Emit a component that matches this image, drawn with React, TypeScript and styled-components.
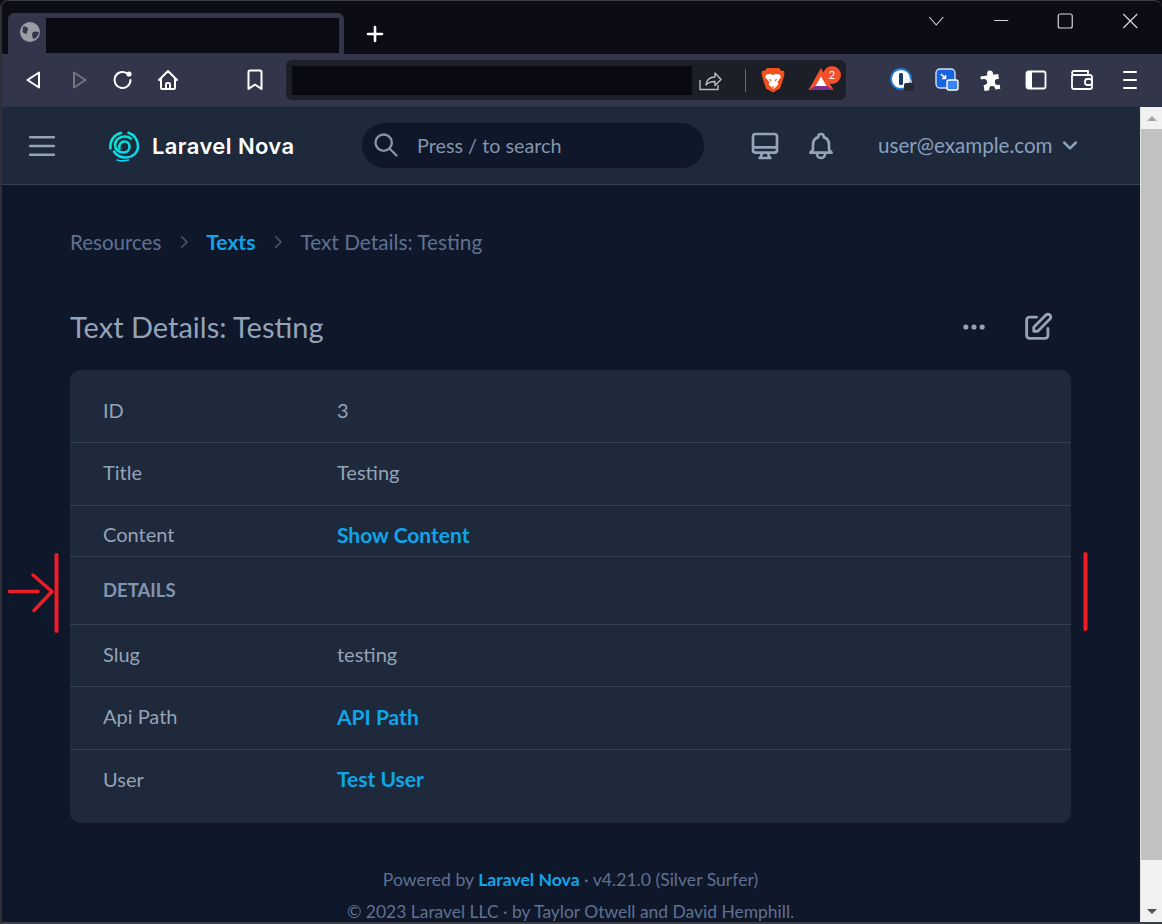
import { createGlobalStyle, styled } from "styled-components";

const GlobalStyle = createGlobalStyle`
  html, body {
    margin: 0;
    padding: 0;
    background: #0b0c14;
  }
  * {
    box-sizing: border-box;
  }
`;

const Win = styled.div`
  position: relative;
  width: 1162px;
  height: 924px;
  overflow: hidden;
  display: flex;
  flex-direction: column;
  background: #0b0c14;
  border-top: 1px solid #3a3c46;
  border-left: 2px solid #2e3038;
  border-bottom: 2px solid #3a3c46;
  border-radius: 8px 8px 0 0;
  font-family: "Lato", "Liberation Sans", sans-serif;
`;

const TabStrip = styled.div`
  height: 53px;
  flex: none;
  display: flex;
  align-items: flex-end;
  padding-left: 6px;
`;
const Tab = styled.div`
  width: 336px;
  height: 41px;
  background: #33364a;
  border-radius: 6px 6px 0 0;
  display: flex;
  align-items: flex-start;
  padding: 5px 5px 1px 12px;
  gap: 6px;
`;
const TabFavicon = styled.svg`
  width: 20px;
  height: 20px;
  margin-top: 4px;
  flex: none;
`;
const TabTitle = styled.div`
  flex: 1;
  height: 35px;
  background: #0a0b13;
`;
const NewTab = styled.svg`
  width: 20px;
  height: 20px;
  margin: 0 0 10px 21px;
  color: #fff;
`;
const WinControls = styled.div`
  margin-left: auto;
  align-self: flex-start;
  display: flex;
  color: #d6d7db;
`;
const WinButton = styled.svg`
  width: 64.5px;
  height: 16px;
  margin-top: 12px;
  overflow: visible;
`;

const Toolbar = styled.div`
  height: 52px;
  flex: none;
  background: #33364a;
  display: flex;
  align-items: center;
  padding-left: 10px;
  color: #fff;
`;
const ToolButton = styled.div<{ $w?: number }>`
  width: ${(p) => p.$w ?? 44.6}px;
  height: 40px;
  flex: none;
  display: flex;
  align-items: center;
  justify-content: center;
`;
const Glyph = styled.svg<{ $size?: number; $dim?: boolean }>`
  width: ${(p) => p.$size ?? 24}px;
  height: ${(p) => p.$size ?? 24}px;
  flex: none;
  color: ${(p) => (p.$dim ? "#73757f" : "inherit")};
  overflow: visible;
`;
const ToolSpacer = styled.div`
  width: 42px;
  flex: none;
`;
const AddressBar = styled.div`
  width: 560px;
  height: 40px;
  flex: none;
  margin-left: 9px;
  border-radius: 6px;
  background: #1c1e28;
  display: flex;
  align-items: center;
  padding-left: 6px;
  color: #b9bac0;
`;
const UrlBlock = styled.div`
  width: 400px;
  height: 29px;
  background: #090a11;
`;
const AddressDivider = styled.div`
  width: 1px;
  height: 23px;
  background: #6a6c75;
  margin: 0 14px 0 17px;
`;
const BatWrap = styled.div`
  position: relative;
  width: 26px;
  height: 26px;
  margin-left: 22px;
`;
const BatBadge = styled.span`
  position: absolute;
  top: -1px;
  right: -7px;
  width: 18px;
  height: 18px;
  border-radius: 50%;
  background: #f0502c;
  color: #fff;
  font-size: 11px;
  line-height: 18px;
  text-align: center;
`;
const ToolRight = styled.div`
  margin-left: 34px;
  display: flex;
  align-items: center;
`;

const Viewport = styled.div`
  flex: 1;
  min-height: 0;
  display: flex;
  border-top: 1px solid #2a3447;
`;
const Page = styled.div`
  flex: 1;
  min-width: 0;
  background: #0f172a;
  display: flex;
  flex-direction: column;
`;
const Scrollbar = styled.div`
  width: 22px;
  flex: none;
  background: #f1f1f1;
  border-left: 1px solid #e2e2e2;
  display: flex;
  flex-direction: column;
  align-items: center;
`;
const ScrollArrow = styled.div<{ $down?: boolean }>`
  height: 22px;
  flex: none;
  display: flex;
  align-items: center;
  justify-content: center;
  margin-top: ${(p) => (p.$down ? "auto" : "0")};
  &::before {
    content: "";
    border-left: 5px solid transparent;
    border-right: 5px solid transparent;
    ${(p) => (p.$down ? "border-top: 5px solid #505050;" : "border-bottom: 5px solid #a3a3a3;")}
  }
`;
const ScrollThumb = styled.div`
  width: 100%;
  height: 731px;
  background: #c1c1c1;
`;

const Header = styled.header`
  height: 78px;
  flex: none;
  background: #1e293b;
  border-bottom: 1px solid #334155;
  display: flex;
  align-items: center;
  color: #94a3b8;
`;
const MenuButton = styled.div`
  width: 106px;
  padding-left: 25px;
  flex: none;
  display: flex;
`;
const Brand = styled.div`
  width: 254px;
  flex: none;
  display: flex;
  align-items: center;
  gap: 12px;
`;
const BrandName = styled.span`
  font-family: "Inter", "Liberation Sans", sans-serif;
  font-size: 22px;
  font-weight: 600;
  letter-spacing: 0.4px;
  color: #fff;
`;
const Search = styled.div`
  width: 342px;
  height: 45px;
  flex: none;
  border-radius: 23px;
  background: #0f172a;
  display: flex;
  align-items: center;
  padding: 0 0 2px 10px;
  gap: 17px;
  font-size: 19.8px;
  color: #8494ac;
`;
const HeaderIcons = styled.div`
  display: flex;
  align-items: center;
  gap: 24px;
  margin-left: 45px;
`;
const UserMenu = styled.div`
  margin-left: 41px;
  padding-bottom: 2px;
  display: flex;
  align-items: center;
  gap: 7px;
  font-size: 20.6px;
  color: #8aa0bf;
`;

const Main = styled.main`
  padding: 42px 69px 0 68px;
`;
const Crumbs = styled.nav`
  display: flex;
  align-items: center;
  height: 29px;
  font-size: 20.5px;
  color: #5f7190;
`;
const CrumbSep = styled.svg`
  width: 18px;
  height: 18px;
  margin: 0 13.5px;
  color: #4b5a73;
`;
const CrumbLink = styled.a`
  font-size: 21px;
  font-weight: 700;
  color: #0ea5e9;
`;
const CrumbCurrent = styled.span`
  font-size: 20.8px;
`;
const TitleRow = styled.div`
  display: flex;
  align-items: center;
  justify-content: space-between;
  margin-top: 42px;
  height: 58px;
`;
const Title = styled.h1`
  margin: 0 0 2px;
  font-size: 29px;
  font-weight: 400;
  color: #94a3b8;
`;
const TitleActions = styled.div`
  display: flex;
  align-items: center;
  gap: 33px;
  padding-right: 16px;
  color: #94a3b8;
`;
const Card = styled.section`
  margin-top: 14px;
  background: #1e293b;
  border-radius: 10px;
  display: flex;
  flex-direction: column;
`;
const Row = styled.div<{ $h: number; $top?: number; $bottom?: number; $last?: boolean }>`
  height: ${(p) => p.$h}px;
  display: grid;
  grid-template-columns: 234px 1fr;
  align-items: center;
  padding: ${(p) => p.$top ?? 0}px 33px ${(p) => p.$bottom ?? 0}px;
  font-size: 20px;
  color: #94a3b8;
  border-bottom: ${(p) => (p.$last ? "none" : "1px solid #334155")};
`;
const RowLink = styled.a`
  font-size: 21px;
  font-weight: 700;
  color: #0ea5e9;
`;
const PanelHeading = styled.span`
  font-size: 18.5px;
  font-weight: 700;
  color: #8195b2;
`;

const Footer = styled.footer`
  margin-top: 41px;
  text-align: center;
  font-size: 17.6px;
  line-height: 32px;
  color: #5f7190;
`;
const FooterLink = styled.a`
  font-weight: 700;
  color: #0ea5e9;
`;
const Copyright = styled.div`
  font-size: 17.45px;
`;

const Scribble = styled.svg`
  position: absolute;
  top: 0;
  left: -2px;
  width: 1162px;
  height: 924px;
  pointer-events: none;
`;

const stroke = {
  fill: "none",
  stroke: "currentColor",
  strokeWidth: 2,
  strokeLinecap: "round" as const,
  strokeLinejoin: "round" as const,
};

type FieldRow = { label: string; value: string; link?: boolean; h: number; top?: number; bottom?: number };

const rows: FieldRow[] = [
  { label: "ID", value: "3", h: 73, top: 8 },
  { label: "Title", value: "Testing", h: 63, bottom: 4 },
  { label: "Content", value: "Show Content", link: true, h: 51, top: 6 },
];
const detailRows: FieldRow[] = [
  { label: "Slug", value: "testing", h: 62, bottom: 4 },
  { label: "Api Path", value: "API Path", link: true, h: 63, bottom: 4 },
  { label: "User", value: "Test User", link: true, h: 73, bottom: 16 },
];

function Spiral() {
  return (
    <Glyph $size={32} viewBox="0 0 32 32">
      <defs>
        <linearGradient id="sw" x1="0" y1="0" x2="1" y2="1">
          <stop offset="0" stopColor="#00e8cf" />
          <stop offset="1" stopColor="#10d0f0" />
        </linearGradient>
      </defs>
      <path
        d="M11.500 18.500C10.500 14.500 13.500 11.500 16.500 11.500C19.500 11.500 21.500 14 21.500 16.500C21.500 20 19 22.500 15.500 22.500C11 22.500 7 19.500 7 15C7 10 11.500 6.500 16.500 6.500C19 6.500 21 7 23 8.500M20.500 2.800C26 4.500 30 10 30 16C30 23 24.500 27.500 17.500 27.500C13 27.500 8.500 25.500 6 21.500M2.500 18.500C1.500 11 6 4.500 13 3"
        fill="none"
        stroke="url(#sw)"
        strokeWidth="2.600"
        strokeLinecap="round"
      />
      <path d="M9 30C12.500 31.200 16.500 31.200 20.500 30" fill="none" stroke="#10d0f0" strokeWidth="1.600" strokeLinecap="round" />
    </Glyph>
  );
}

function RowValue({ value, link }: { value: string; link?: boolean }) {
  return link ? <RowLink>{value}</RowLink> : <span>{value}</span>;
}

export default function App() {
  return (
    <Win>
      <GlobalStyle />
      <TabStrip>
        <Tab>
          <TabFavicon viewBox="0 0 20 20">
            <circle cx="10" cy="10" r="10" fill="#9a9ca6" />
            <path d="M3 5c2.500-1 4.500 0 5 2s-2 2.500-1 4-2.500 1-4.500-1zM13 10c2-1 4-.5 6 0-.5 3-2.500 6-5 7-2-1-2.500-5-1-7z" fill="#33364a" />
          </TabFavicon>
          <TabTitle />
        </Tab>
        <NewTab viewBox="0 0 20 20">
          <path d="M10 3v14M3 10h14" fill="none" stroke="currentColor" strokeWidth="2.600" strokeLinecap="round" />
        </NewTab>
        <WinControls>
          <WinButton viewBox="0 0 64 16">
            <path d="M25 4l7 8 7-8" fill="none" stroke="currentColor" strokeWidth="1.100" />
          </WinButton>
          <WinButton viewBox="0 0 64 16">
            <path d="M25 7.500h14" fill="none" stroke="currentColor" strokeWidth="1.200" />
          </WinButton>
          <WinButton viewBox="0 0 64 16">
            <rect x="25" y="1" width="14" height="14" rx="2" fill="none" stroke="currentColor" strokeWidth="1.200" />
          </WinButton>
          <WinButton viewBox="0 0 64 16">
            <path d="M25 1l14 14M39 1L25 15" fill="none" stroke="currentColor" strokeWidth="1.200" />
          </WinButton>
        </WinControls>
      </TabStrip>

      <Toolbar>
        <ToolButton>
          <Glyph viewBox="0 0 24 24">
            <path d="M17 4.500v15L5.500 12z" {...stroke} />
          </Glyph>
        </ToolButton>
        <ToolButton>
          <Glyph $dim viewBox="0 0 24 24">
            <path d="M7 4.500v15L18.500 12z" {...stroke} />
          </Glyph>
        </ToolButton>
        <ToolButton>
          <Glyph viewBox="0 0 24 24">
            <path d="M19.500 12a8 8 0 1 1-3.400-6.600" {...stroke} />
            <circle cx="18" cy="6" r="2.600" fill="currentColor" />
          </Glyph>
        </ToolButton>
        <ToolButton>
          <Glyph viewBox="0 0 24 24">
            <path d="M3 12l2-2m0 0l7-7 7 7M5 10v10a1 1 0 001 1h3m10-11l2 2m-2-2v10a1 1 0 01-1 1h-3m-6 0a1 1 0 001-1v-4a1 1 0 011-1h2a1 1 0 011 1v4a1 1 0 001 1m-6 0h6" {...stroke} />
          </Glyph>
        </ToolButton>
        <ToolSpacer />
        <ToolButton>
          <Glyph viewBox="0 0 24 24">
            <path d="M5.500 4a1.500 1.500 0 0 1 1.500-1.500h10A1.500 1.500 0 0 1 18.500 4v17L12 16.500 5.500 21z" {...stroke} />
          </Glyph>
        </ToolButton>
        <AddressBar>
          <UrlBlock />
          <ToolButton $w={36}>
            <Glyph viewBox="0 0 24 24">
              <path d="M2 12v9.500h18V17M8 17c0-5 4-8 9-8V5l6 6.500-6 6V13.500c-4 0-7 1-9 3.500z" fill="none" stroke="currentColor" strokeWidth="1.400" strokeLinejoin="round" />
            </Glyph>
          </ToolButton>
          <AddressDivider />
          <Glyph $size={26} viewBox="0 0 26 26">
            <path d="M7 1h12l2 2.500 3 .5 .5 3-1.500 5.500-3 9-7 4-7-4-3-9L1.500 7 2 4l3-.5z" fill="#f1511e" />
            <path d="M6.500 7.500c3-1 4.500-.5 6.500.5 2-1 3.500-1.500 6.500-.5l1.500 2.500-3.500 5 1 2-2.500 3-2.500 2-2.500-2-2.500-3 1-2L5 10z" fill="#fff" />
            <path d="M8.500 11.500l3 1.500-1 1.500zM17.500 11.500l-3 1.500 1 1.500zM11 19.500h4l-2 1.500z" fill="#f1511e" />
          </Glyph>
          <BatWrap>
            <Glyph $size={26} viewBox="0 0 26 26">
              <path d="M13 1l12.500 22H.5z" fill="#f2502a" />
              <path d="M13 9.500l5.500 9.500h-11z" fill="#fff" />
              <path d="M.5 23h25l-7-4h-11z" fill="#7c2f92" />
            </Glyph>
            <BatBadge>2</BatBadge>
          </BatWrap>
        </AddressBar>
        <ToolRight>
          <ToolButton>
            <Glyph viewBox="0 0 24 24">
              <circle cx="11" cy="11" r="10" fill="#fff" stroke="#1f7ad8" strokeWidth="1.800" />
              <rect x="9" y="5" width="4" height="12" rx="1.500" fill="#1a3a70" />
              <rect x="14" y="15" width="10" height="8" rx="2" fill="#26282f" />
              <path d="M17 15v-1.500a2 2 0 0 1 4 0V15" fill="none" stroke="#e8e8ea" strokeWidth="1.200" />
            </Glyph>
          </ToolButton>
          <ToolButton>
            <Glyph viewBox="0 0 24 24">
              <rect x="1" y="1" width="19" height="19" rx="4" fill="#1a63de" stroke="#cfe0fa" strokeWidth="1.400" />
              <rect x="12" y="12" width="11" height="10" rx="2" fill="#3b82f6" stroke="#fff" strokeWidth="1.400" />
              <path d="M6 6l4.500 4.500M10.500 7v3.500H7" fill="none" stroke="#fff" strokeWidth="1.500" />
            </Glyph>
          </ToolButton>
          <ToolButton>
            <Glyph viewBox="0 0 24 24">
              <path d="M9 5.500a3 3 0 1 1 6 0V7h5v5h-1.500a3 3 0 1 0 0 6H20v4h-5v-1a3 3 0 1 0-6 0v1H4v-6h1a3 3 0 1 0 0-6H2V7h7z" fill="currentColor" transform="rotate(-8 12 12)" />
            </Glyph>
          </ToolButton>
          <ToolButton>
            <Glyph viewBox="0 0 24 24">
              <rect x="2.500" y="3.500" width="19" height="17" rx="2" fill="none" stroke="currentColor" strokeWidth="1.800" />
              <rect x="3" y="4" width="5" height="16" fill="currentColor" />
            </Glyph>
          </ToolButton>
          <ToolButton $w={48}>
            <Glyph viewBox="0 0 24 24">
              <path d="M2 7V19a2 2 0 0 0 2 2h16a2 2 0 0 0 2-2V9a2 2 0 0 0-2-2H4a2 2 0 0 1-2-2 2 2 0 0 1 2-2h14v4" fill="none" stroke="currentColor" strokeWidth="1.800" />
              <rect x="15" y="11" width="7" height="6" rx="2.500" fill="#33364a" stroke="currentColor" strokeWidth="1.800" />
            </Glyph>
          </ToolButton>
          <ToolButton $w={48}>
            <Glyph viewBox="0 0 24 24">
              <path d="M6 4h12M6 12h12M6 20h12" fill="none" stroke="currentColor" strokeWidth="2" strokeLinecap="round" />
            </Glyph>
          </ToolButton>
        </ToolRight>
      </Toolbar>

      <Viewport>
        <Page>
          <Header>
            <MenuButton>
              <Glyph $size={30} viewBox="0 0 24 24">
                <path d="M2.500 5h19M2.500 12h19M2.500 19h19" {...stroke} />
              </Glyph>
            </MenuButton>
            <Brand>
              <Spiral />
              <BrandName>Laravel Nova</BrandName>
            </Brand>
            <Search>
              <Glyph $size={28} viewBox="0 0 24 24">
                <path d="M21 21l-6-6m2-5a7 7 0 11-14 0 7 7 0 0114 0z" {...stroke} />
              </Glyph>
              Press / to search
            </Search>
            <HeaderIcons>
              <Glyph $size={32} viewBox="0 0 24 24">
                <path d="M9.750 17L9 20l-1 1h8l-1-1-.75-3M3 13h18M5 17h14a2 2 0 002-2V5a2 2 0 00-2-2H5a2 2 0 00-2 2v10a2 2 0 002 2z" {...stroke} />
              </Glyph>
              <Glyph $size={32} viewBox="0 0 24 24">
                <path d="M15 17h5l-1.405-1.405A2.032 2.032 0 0118 14.158V11a6.002 6.002 0 00-4-5.659V5a2 2 0 10-4 0v.341C7.670 6.165 6 8.388 6 11v3.159c0 .538-.214 1.055-.595 1.436L4 17h5m6 0v1a3 3 0 11-6 0v-1m6 0H9" {...stroke} />
              </Glyph>
            </HeaderIcons>
            <UserMenu>
              user@example.com
              <Glyph $size={20} viewBox="0 0 24 24">
                <path d="M19 9l-7 7-7-7" {...stroke} strokeWidth={3} />
              </Glyph>
            </UserMenu>
          </Header>
          <Main>
            <Crumbs>
              Resources
              <CrumbSep viewBox="0 0 24 24">
                <path d="M9 5l7 7-7 7" {...stroke} />
              </CrumbSep>
              <CrumbLink>Texts</CrumbLink>
              <CrumbSep viewBox="0 0 24 24">
                <path d="M9 5l7 7-7 7" {...stroke} />
              </CrumbSep>
              <CrumbCurrent>Text Details: Testing</CrumbCurrent>
            </Crumbs>
            <TitleRow>
              <Title>Text Details: Testing</Title>
              <TitleActions>
                <Glyph $size={28} viewBox="0 0 24 24">
                  <circle cx="5" cy="12" r="2.200" fill="currentColor" />
                  <circle cx="12" cy="12" r="2.200" fill="currentColor" />
                  <circle cx="19" cy="12" r="2.200" fill="currentColor" />
                </Glyph>
                <Glyph $size={34} viewBox="0 0 24 24">
                  <path d="M11 5H6a2 2 0 00-2 2v11a2 2 0 002 2h11a2 2 0 002-2v-5m-1.414-9.414a2 2 0 112.828 2.828L11.828 15H9v-2.828l8.586-8.586z" {...stroke} />
                </Glyph>
              </TitleActions>
            </TitleRow>
            <Card>
              {rows.map((r) => (
                <Row key={r.label} $h={r.h} $top={r.top} $bottom={r.bottom}>
                  <span>{r.label}</span>
                  <RowValue value={r.value} link={r.link} />
                </Row>
              ))}
              <Row $h={68} $bottom={2}>
                <PanelHeading>DETAILS</PanelHeading>
              </Row>
              {detailRows.map((r, i) => (
                <Row key={r.label} $h={r.h} $bottom={r.bottom} $last={i === detailRows.length - 1}>
                  <span>{r.label}</span>
                  <RowValue value={r.value} link={r.link} />
                </Row>
              ))}
            </Card>
            <Footer>
              <div>
                Powered by <FooterLink>Laravel Nova</FooterLink> · v4.21.0 (Silver Surfer)
              </div>
              <Copyright>© 2023 Laravel LLC · by Taylor Otwell and David Hemphill.</Copyright>
            </Footer>
          </Main>
        </Page>
        <Scrollbar>
          <ScrollArrow />
          <ScrollThumb />
          <ScrollArrow $down />
        </Scrollbar>
      </Viewport>

      <Scribble viewBox="0 0 1162 924">
        <path d="M56.500 554v76M1085.500 553v75" fill="none" stroke="#ee1c25" strokeWidth="4" strokeLinecap="round" />
        <path d="M9.500 590.500H38M33 574l19 16.500-18 19" fill="none" stroke="#ee1c25" strokeWidth="3.500" strokeLinecap="round" strokeLinejoin="round" />
      </Scribble>
    </Win>
  );
}
